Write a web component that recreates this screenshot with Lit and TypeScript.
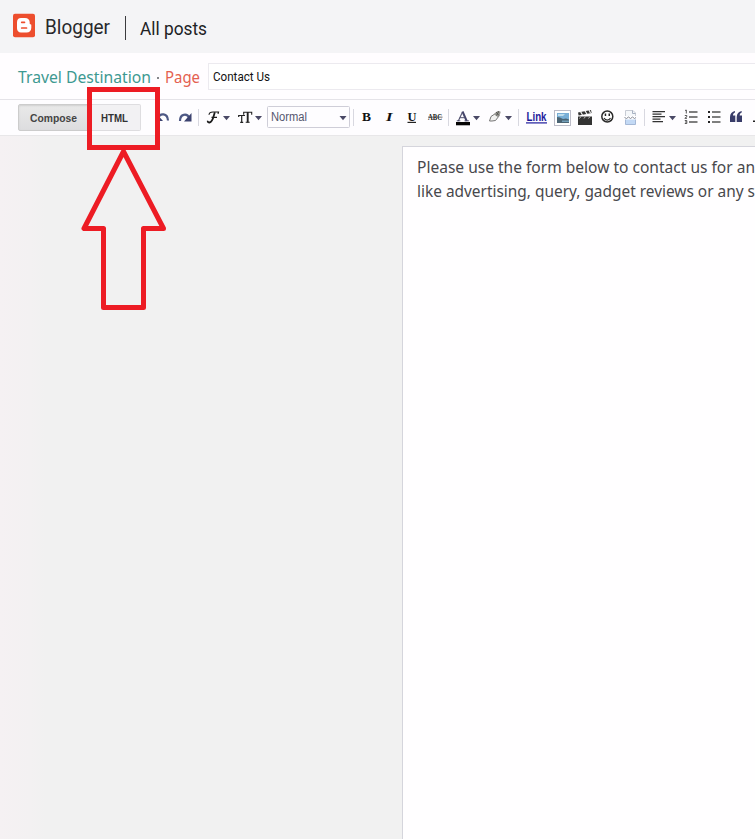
import { LitElement, html, svg, css } from "lit";
import { customElement } from "lit/decorators.js";

/** One line of text set to a given width; b is the baseline. */
const label = (text: string, w: number, h: number, b: number, cls: string) => html`
  <svg class="label ${cls}" width=${w} height=${h}>
    <text x="0" y=${b} textLength=${w} lengthAdjust="spacingAndGlyphs">${text}</text>
  </svg>`;

/** A toolbar cell: x is its start along the bar, w its width. */
const cell = (x: number, w: number, art: unknown) => html`
  <svg class="cell" width=${w} height="36" viewBox="${x} 0 ${w} 36">${art}</svg>`;

const caret = (x: number) => svg`<path class="caret" d="M${x} 16h7l-3.5 4.2z"/>`;
const sep = (x: number) => cell(x, 1, svg`<path class="sep" d="M${x} 9h1v17h-1z"/>`);

@customElement("app-root")
export class AppRoot extends LitElement {
  static styles = css`
    :host { display: flex; flex-direction: column; position: relative; width: 755px; height: 839px; overflow: hidden; background: #f1f1f1; font-family: "Liberation Sans", Arial, sans-serif; }
    .label, .cell { display: block; flex: none; overflow: visible; }
    .top { height: 53px; flex: none; display: flex; box-sizing: border-box; padding-left: 13px; background: #f4f4f6; }
    .logo { display: block; margin-top: 13px; }
    .brand { font: 20px Roboto, sans-serif; fill: #28282b; margin-left: 10px; }
    .rule { width: 1px; height: 24px; margin: 16px 14px 0 15px; background: #3b3b3e; }
    .posts { font: 19px Roboto, sans-serif; fill: #202124; }
    .title { height: 46px; flex: none; display: flex; padding-left: 18px; background: #fffdff; border-bottom: 1px solid #e5e3e8; }
    .blog, .kind { font: 17px "Noto Sans", "Open Sans", sans-serif; }
    .blog { fill: #3d9991; }
    .dot { width: 2px; height: 2px; margin: 24px 6px 0 6px; background: #858589; }
    .kind { fill: #e4604f; }
    .field { flex: 1; height: 25px; margin: 10px 0 0 8px; border: 1px solid #eceaef; border-right: 0; padding-left: 4px; background: #fff; }
    .name { font: 12px Roboto, sans-serif; fill: #111; }
    .bar { height: 36px; flex: none; display: flex; padding-left: 18px; background: #fefdff; border-bottom: 1px solid #e8e7e9; box-sizing: border-box; }
    .btn { display: flex; box-sizing: border-box; height: 27px; margin-top: 4px; border: 1px solid #ccc; border-radius: 2px 0 0 2px; background: linear-gradient(#e9e9e9, #dddddf); }
    .compose { width: 71px; padding-left: 11px; box-shadow: inset 0 1px 2px #d0d0d0; }
    .code { width: 52px; padding-left: 12px; border-color: #dedde0; border-left: 0; border-radius: 0 2px 2px 0; background: #f2f1f3; }
    .btn .label { font: bold 11px "Liberation Sans", Arial, sans-serif; fill: #444; }
    .btn.code .label { fill: #333; }
    .gap { width: 12px; flex: none; }
    .sep { fill: #d8d8e0; }
    .caret { fill: #4a4966; }
    .ink { fill: #222; }
    .navy { fill: #3c4370; }
    .serif { font: bold 12.5px "Liberation Serif", serif; fill: #111; }
    .slant { font-style: italic; }
    .small { font: bold 8.5px "Liberation Serif", serif; fill: #222; }
    .sel { font: 12px "Liberation Sans", Arial, sans-serif; fill: #55566e; }
    .link { font: bold 12px "Liberation Sans", Arial, sans-serif; fill: #1d199b; }
    .work { flex: 1; display: flex; background: linear-gradient(90deg, #f5f1f3, #f3f1f2 30px, #f1f1f1 45px); }
    .sheet { flex: 1; margin: 10px 0 0 402px; border: 1px solid #d5d5dc; border-right: 0; border-bottom: 0; background: #fffeff; padding: 8px 0 0 14px; }
    .copy { font: 16.5px "Noto Sans", "Open Sans", sans-serif; fill: #48484c; }
    .mark { position: absolute; left: 80px; top: 84px; overflow: visible; }
  `;

  render() {
    return html`
      <div class="top">
        <svg class="logo" width="22" height="25" viewBox="0 0 22 25">
          <rect y=".7" width="22" height="23.5" rx="2" fill="#ed4e2e"/>
          <path fill="#fff" d="M8 5h4c3 0 4.700 1.700 4.700 4.200v1c0 .8.3 1.100.8 1.100.5 0 .8.3.8.8v2.700c0 3-1.800 4.700-4.700 4.700H8c-2.500 0-4-1.600-4-4.200V9.200C4 6.600 5.500 5 8 5z"/>
          <path stroke="#ed4e2e" stroke-width="1.700" stroke-linecap="round" d="M8.700 9.300h2.800M8.700 15h4.800"/>
        </svg>
        ${label("Blogger", 65, 50, 34, "brand")}
        <div class="rule"></div>
        ${label("All posts", 67, 50, 35, "posts")}
      </div>
      <div class="title">
        ${label("Travel Destination", 133, 40, 30, "blog")}
        <div class="dot"></div>
        ${label("Page", 35, 40, 30, "kind")}
        <div class="field">${label("Contact Us", 57, 24, 16.5, "name")}</div>
      </div>
      <div class="bar">
        <div class="btn compose">${label("Compose", 47, 25, 17, "")}</div>
        <div class="btn code">${label("HTML", 27, 25, 17, "")}</div>
        <div class="gap"></div>
        ${cell(153, 45, svg`
          <path d="M158 18.500c2-6 9.500-5.500 10 2" fill="none" stroke="#4e5985" stroke-width="2.200"/>
          <path class="navy" d="M156 13v8h7z"/>
          <path d="M180 21c0-7 7-8.500 9.500-2.500" fill="none" stroke="#4e5985" stroke-width="2.200"/>
          <path class="navy" d="M191.500 13v8.500H184z"/>`)}
        ${sep(198)}
        ${cell(199, 68, svg`
          <path d="M209 14.800c.2-2 2-2.800 4-2.800h5.500l-.5 1.800M211.500 17.300h5.500" fill="none" stroke="#1c1c1c" stroke-width="1.200"/>
          <path d="M214.800 12.200c-1.300 4-1.800 9.800-5.300 10.300-1.200 0-2-.7-1.700-1.700" fill="none" stroke="#1c1c1c" stroke-width="1.800"/>
          ${caret(223)}
          <path d="M238.700 17v-1.500h6.300M241.700 15.500v7M240.200 22.300h3" fill="none" stroke="#222" stroke-width="1.200"/>
          <path d="M243.700 14.700v-2.400h8v2.400M245.700 22.300h4" fill="none" stroke="#222" stroke-width="1.100"/>
          <path d="M247.700 12v10.500" fill="none" stroke="#222" stroke-width="1.900"/>
          ${caret(255)}`)}
        ${cell(267, 86, svg`
          <rect x="267.500" y="6.500" width="82" height="21" rx="1" fill="#fefdff" stroke="#cfced8"/>
          <text class="sel" x="271" y="21" textLength="36" lengthAdjust="spacingAndGlyphs">Normal</text>
          ${caret(339.500)}`)}
        ${sep(353)}
        ${cell(354, 94, svg`
          <text class="serif" x="362" y="21" textLength="9" lengthAdjust="spacingAndGlyphs">B</text>
          <text class="serif slant" x="386" y="21" textLength="6.500" lengthAdjust="spacingAndGlyphs">I</text>
          <text class="serif" x="407.500" y="20.500" textLength="9" lengthAdjust="spacingAndGlyphs">U</text>
          <path class="ink" d="M407.500 21.800h8.500v1.200h-8.500z"/>
          <text class="small" x="428" y="20" textLength="14" lengthAdjust="spacingAndGlyphs">ABC</text>
          <path fill="#444" d="M428 16.700h14.500v.8H428z"/>`)}
        ${sep(448)}
        ${cell(449, 69, svg`
          <path d="M458.300 21l4.200-9" fill="none" stroke="#50506f" stroke-width="1.100"/>
          <path d="M462.500 11.500l4.200 9.500" fill="none" stroke="#45456a" stroke-width="2"/>
          <path d="M459.700 17.700h5.500M456.800 20.800h3.500M464.500 20.800h4.300" fill="none" stroke="#50506f"/>
          <path fill="#050505" d="M456 22h14v3.300h-14z"/>
          ${caret(473)}
          <path d="M489.500 21l1.500-4.500 4.500-3 3.500 2.500-3.500 4.500-3.500.5z" fill="#f2f2f0" stroke="#777"/>
          <path d="M494.500 13.500l3-2.500 3.300.8-1.300 4-1.500 1.500-3.500-2.500z" fill="#999995"/>
          <path d="M496 12l3 3.500M499 11l-2.500 4.500" fill="none" stroke="#55554f"/>
          ${caret(505)}`)}
        ${sep(518)}
        ${cell(519, 125, svg`
          <text class="link" x="526.500" y="21" textLength="20" lengthAdjust="spacingAndGlyphs">Link</text>
          <path fill="#1d199b" d="M526 22.300h21v1.200h-21z"/>
          <rect x="554.500" y="10.500" width="16" height="15" fill="#fff" stroke="#bcbcc8"/>
          <path fill="#78aed6" d="M557 13h12v10h-12z"/><path fill="#c0dceb" d="M558 14h7l-2 2h-5z"/>
          <path fill="#4b6474" d="M557 17l3 .5 3 1.500 3-.5 3 1v3.500h-12z"/><path fill="#729fb9" d="M562 20.500h7V22h-7z"/>
          <path fill="#333" d="M578 16.500h14V25h-14zM578 12.500l13-2.500.6 3-13 2.600z"/>
          <path d="M580.500 11.500l2 3.500M585 10.700l2 3.500M589 10l1.500 3" stroke="#f0f0f0" stroke-width="1.200"/>
          <path d="M581 16.500l-1.500 2M585.500 16.500l-1.500 2M590 16.500l-1.500 2" stroke="#bbb"/>
          <circle cx="607.300" cy="16.500" r="5.500" fill="#fff" stroke="#2a2a2a" stroke-width="1.500"/>
          <path class="ink" d="M604.700 13.500h1.500v2.500h-1.500zM608.500 13.500h1.500v2.500h-1.500z"/>
          <path d="M604 18c1.500 2.800 5 2.800 6.500 0" fill="none" stroke="#2a2a2a" stroke-width="1.200"/>
          <path d="M625.500 16v-5.500h7.500l2.500 2.500v3" fill="#f5f7fa" stroke="#c7cbd4"/>
          <path d="M625.500 19.500v5h10v-5" fill="#c3d9f5" stroke="#a5b8d6"/>
          <path d="M624.500 17.500l2 1 2-1.500 2 1.500 2-1.500 2 1.500 1.500-1" fill="none" stroke="#868b95"/>
          <path d="M632.500 10.500v3h3" fill="none" stroke="#a7b1c2"/>`)}
        ${sep(644)}
        ${cell(645, 110, svg`
          <path d="M652.500 11.700H665M652.500 14.200h9M652.500 16.700H665M652.500 19.200h8M652.500 21.700H663" fill="none" stroke="#333" stroke-width="1.300"/>
          ${caret(669)}
          <path d="M689 12h8.500M689 17h8.500M689 22h8.500" fill="none" stroke="#555" stroke-width="1.500"/>
          <path d="M685 10.500l1.300-.5v3.500M684.800 15.500h2v1.300l-2 1.500h2.200M684.800 20.500h2v3h-2M685 22h1.500" fill="none" stroke="#444" stroke-width=".9"/>
          <path d="M712 12h8.500M712 17h8.500M712 22h8.500" fill="none" stroke="#555" stroke-width="1.500"/>
          <path class="ink" d="M708 11h2v2h-2zM708 16h2v2h-2zM708 21h2v2h-2z"/>
          <path fill="#383c69" d="M735 11v1.500c-1.500.5-2 1.500-2 3h2.300V22H730v-5c0-3.500 2-5.500 5-6zM741.700 11v1.500c-1.500.5-2 1.500-2 3h2.300V22h-5.300v-5c0-3.500 2-5.500 5-6z"/>
          <path class="ink" d="M753 20.500h2V22h-2z"/>`)}
      </div>
      <div class="work">
        <div class="sheet">
          ${label("Please use the form below to contact us for an", 338, 24, 17.5, "copy")}
          ${label("like advertising, query, gadget reviews or any s", 338, 24, 17.5, "copy")}
        </div>
      </div>
      <svg class="mark" width="90" height="230" viewBox="80 84 90 230" fill="none" stroke="#ed1c24" stroke-width="5" stroke-linejoin="round">
        <path stroke-linejoin="miter" d="M89.500 89.500h68v58h-68z"/>
        <path d="M123.500 151.500L84 228.500h19.500v79h40v-79H163.500z"/>
      </svg>
    `;
  }
}
